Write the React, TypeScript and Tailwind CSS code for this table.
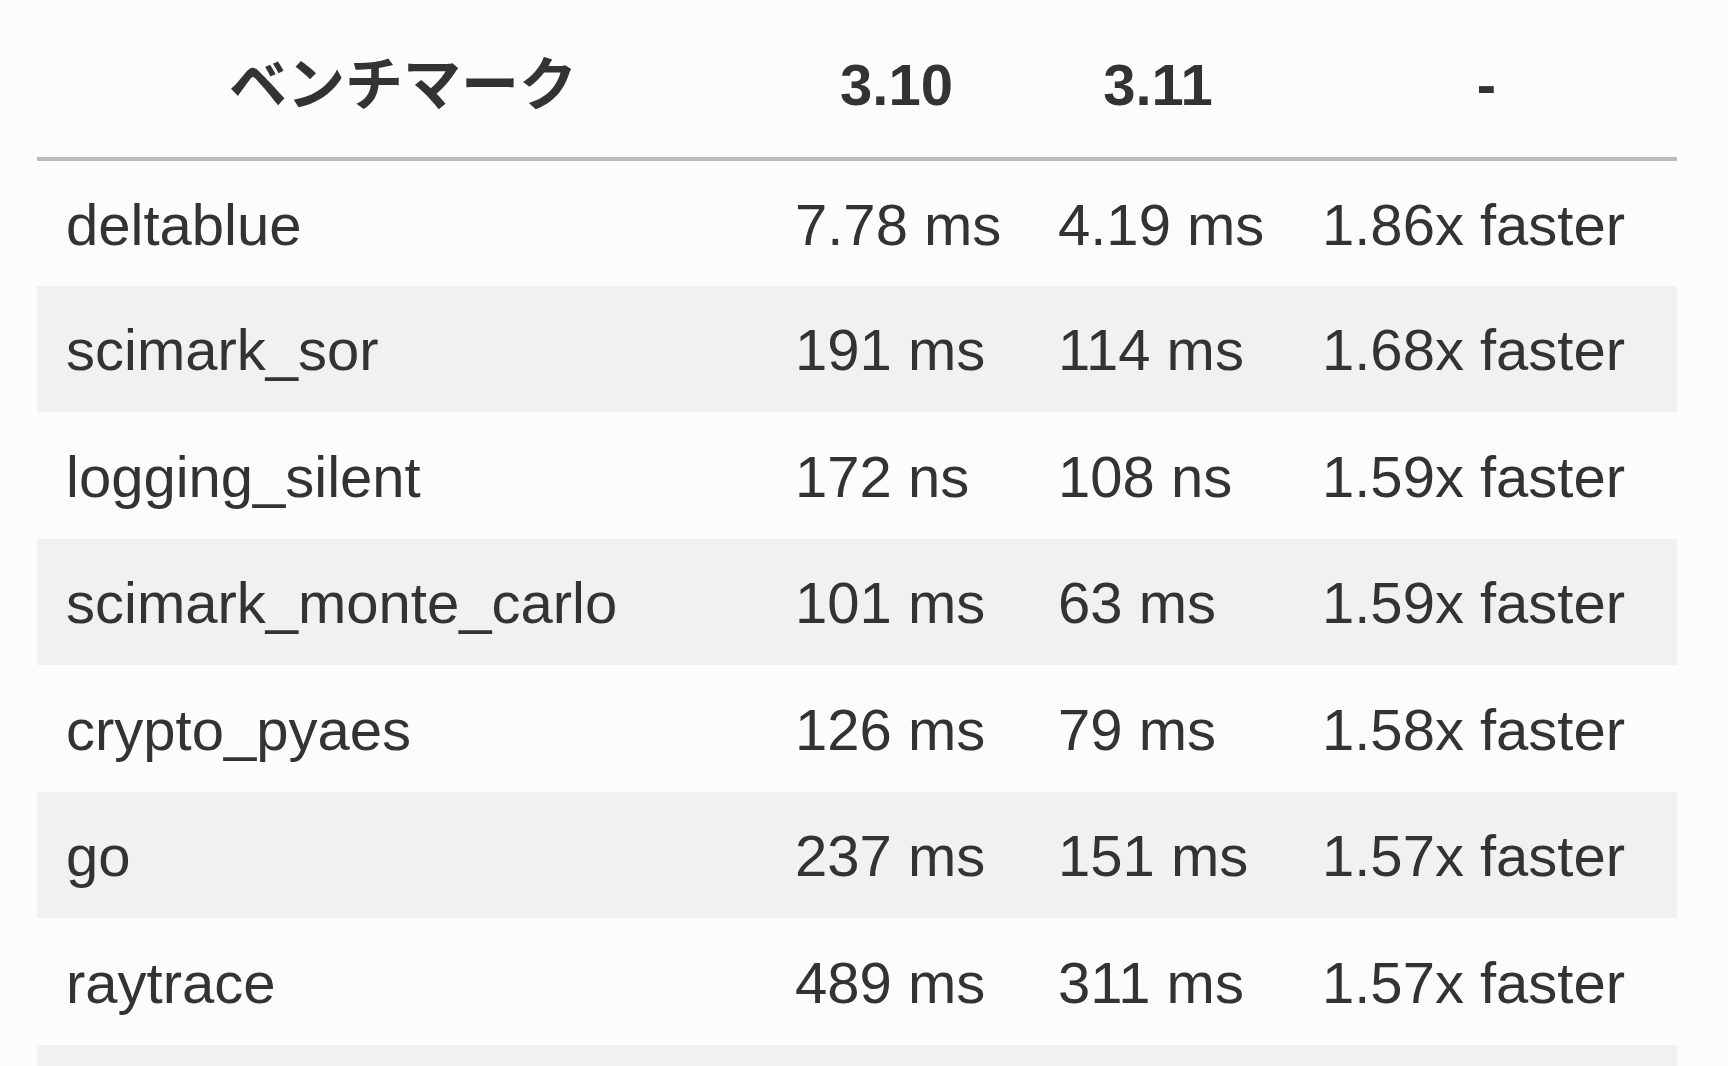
import React from "react";

const rows = [
  ["deltablue", "7.78 ms", "4.19 ms", "1.86x faster"],
  ["scimark_sor", "191 ms", "114 ms", "1.68x faster"],
  ["logging_silent", "172 ns", "108 ns", "1.59x faster"],
  ["scimark_monte_carlo", "101 ms", "63 ms", "1.59x faster"],
  ["crypto_pyaes", "126 ms", "79 ms", "1.58x faster"],
  ["go", "237 ms", "151 ms", "1.57x faster"],
  ["raytrace", "489 ms", "311 ms", "1.57x faster"],
  ["", "", "", ""],
];

export default function App() {
  return (
    <div className="h-screen bg-[#fcfcfc] text-[#333333] overflow-hidden">
      <table
        className="ml-[37px] w-[1640px] table-fixed border-collapse text-[58px]"
        style={{ fontFamily: '"Liberation Sans", "Noto Sans CJK JP", Arial, sans-serif' }}
      >
        <colgroup>
          <col className="w-[732px]" />
          <col className="w-[263px]" />
          <col className="w-[264px]" />
          <col className="w-[381px]" />
        </colgroup>
        <thead>
          <tr className="h-[159px] border-b-4 border-[#bbbbbb]">
            <th className="px-[28px] pt-[12px] text-center font-bold">ベンチマーク</th>
            <th className="pl-[24px] pr-[32px] pt-[12px] text-center font-bold">3.10</th>
            <th className="pl-[22px] pr-[34px] pt-[12px] text-center font-bold">3.11</th>
            <th className="px-[28px] pt-[12px] text-center font-bold">-</th>
          </tr>
        </thead>
        <tbody>
          {rows.map((r, i) => (
            <tr
              key={i}
              className={i % 2 === 1 ? "h-[126.5px] bg-[#f1f1f1]" : "h-[126.5px] bg-[#fcfcfc]"}
            >
              <td className="pl-[29px] pr-[28px] pt-[2px] whitespace-nowrap">{r[0]}</td>
              <td className="px-[26px] pt-[2px] whitespace-nowrap">{r[1]}</td>
              <td className="px-[26px] pt-[2px] whitespace-nowrap">{r[2]}</td>
              <td className="px-[26px] pt-[2px] whitespace-nowrap">{r[3]}</td>
            </tr>
          ))}
        </tbody>
      </table>
    </div>
  );
}
